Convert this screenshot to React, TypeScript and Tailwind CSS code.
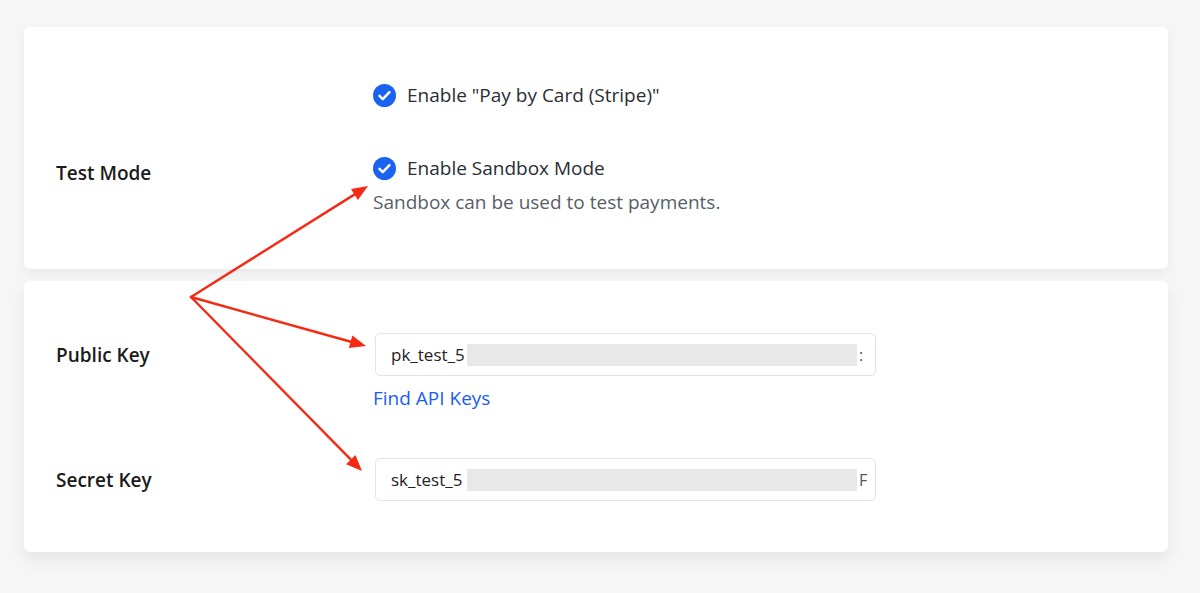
import React from 'react';

const font = { fontFamily: '"Open Sans", Lato, sans-serif' };

const arrows = [
  { x: 368, y: 186 },
  { x: 366, y: 346 },
  { x: 362, y: 471 },
];

function arrowHead(ox: number, oy: number, tx: number, ty: number) {
  const dx = tx - ox;
  const dy = ty - oy;
  const len = Math.hypot(dx, dy);
  const ux = dx / len;
  const uy = dy / len;
  const bx = tx - ux * 16;
  const by = ty - uy * 16;
  const w = 6.5;
  return `${tx},${ty} ${bx - uy * w},${by + ux * w} ${bx + uy * w},${by - ux * w}`;
}

function CheckCircle() {
  return (
    <svg width="23" height="23" viewBox="0 0 24 24" className="shrink-0">
      <circle cx="12" cy="12" r="12" fill="#1a62f0" />
      <path d="M6.8 12.4l3.4 3.4 7-7.2" fill="none" stroke="#fff" strokeWidth="2.6" strokeLinecap="round" strokeLinejoin="round" />
    </svg>
  );
}

function KeyInput({ prefix, tail }: { prefix: string; tail: string }) {
  return (
    <div className="w-[501px] h-[43px] rounded-[5px] border border-[#e3e3e3] bg-white flex items-center pl-[15px] pr-[4px] overflow-hidden">
      <span className="text-[17px] text-[#222] w-[76px] overflow-hidden whitespace-nowrap">{prefix}</span>
      <span className="w-[390px] h-[22px] bg-[#e8e8e8]" />
      <span className="ml-[2px] text-[16px] text-[#555]">{tail}</span>
    </div>
  );
}

export default function App() {
  const ox = 191;
  const oy = 297;
  return (
    <div className="relative min-h-[593px] bg-[#f6f6f6] pl-6 pr-8 pt-[27px]" style={font}>
      {/* Test mode card */}
      <section className="bg-white rounded-[6px] h-[242px] flex shadow-[0_4px_10px_rgba(0,0,0,0.06)]">
        <div className="w-[349px] pl-8 pt-[134px]">
          <p className="text-[19px] leading-6 font-semibold text-[#1b1b1b]">Test Mode</p>
        </div>
        <div className="pt-[56px]">
          <div className="flex items-center gap-[11px] h-6">
            <CheckCircle />
            <span className="text-[19px] text-[#2a2d33]">Enable "Pay by Card (Stripe)"</span>
          </div>
          <div className="flex items-center gap-[11px] h-6 mt-[49px]">
            <CheckCircle />
            <span className="text-[19px] text-[#2a2d33]">Enable Sandbox Mode</span>
          </div>
          <p className="mt-[10px] text-[19px] leading-6 text-[#585e68]">Sandbox can be used to test payments.</p>
        </div>
      </section>

      {/* Keys card */}
      <section className="mt-3 bg-white rounded-[6px] h-[271px] shadow-[0_8px_16px_rgba(0,0,0,0.07)] pt-[52px]">
        <div className="flex items-center">
          <div className="w-[351px] pl-8">
            <p className="text-[19px] leading-6 font-semibold text-[#1b1b1b]">Public Key</p>
          </div>
          <KeyInput prefix="pk_test_5" tail=":" />
        </div>
        <div className="pl-[349px] mt-[10px]">
          <a className="text-[19px] leading-6 text-[#1a5cf5]">Find API Keys</a>
        </div>
        <div className="flex items-center mt-[47px]">
          <div className="w-[351px] pl-8">
            <p className="text-[19px] leading-6 font-semibold text-[#1b1b1b]">Secret Key</p>
          </div>
          <KeyInput prefix="sk_test_5" tail="F" />
        </div>
      </section>

      {/* Annotation arrows */}
      <svg className="absolute inset-0 pointer-events-none" width="1200" height="593">
        {arrows.map((a, i) => {
          const len = Math.hypot(a.x - ox, a.y - oy);
          const ex = a.x - ((a.x - ox) / len) * 12;
          const ey = a.y - ((a.y - oy) / len) * 12;
          return (
            <g key={i}>
              <line x1={ox} y1={oy} x2={ex} y2={ey} stroke="#f52a14" strokeWidth="2.4" strokeLinecap="round" />
              <polygon points={arrowHead(ox, oy, a.x, a.y)} fill="#f52a14" />
            </g>
          );
        })}
      </svg>
    </div>
  );
}
